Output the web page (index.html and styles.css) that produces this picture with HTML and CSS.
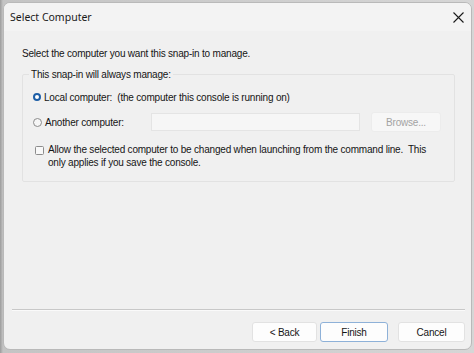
FILE: index.html
```html
<!DOCTYPE html>
<html lang="en">
<head>
  <meta charset="UTF-8" />
  <title>Select Computer</title>
  <link rel="stylesheet" href="styles.css">
</head>
<body>

<div class="dialog">
  <div class="titlebar">
    <span class="title">Select Computer</span>
    <svg class="close" width="11" height="11" viewBox="0 0 11 11">
      <path d="M0.5 0.5 L10.5 10.5 M10.5 0.5 L0.5 10.5" stroke="#1b1b1b" stroke-width="1.1" fill="none"/>
    </svg>
  </div>

  <div class="content">
    <p class="intro">Select the computer you want this snap-in to manage.</p>

    <fieldset class="group">
      <legend>This snap-in will always manage:</legend>

      <div class="row">
        <span class="radio checked"></span>
        <span>Local computer:&nbsp; (the computer this console is running on)</span>
      </div>

      <div class="row row-other">
        <span class="other-label">
          <span class="radio"></span>
          <span>Another computer:</span>
        </span>
        <span class="field"></span>
        <span class="btn btn-disabled browse">Browse...</span>
      </div>

      <div class="check-row">
        <span class="checkbox"></span>
        <span class="check-text">Allow the selected computer to be changed when launching from the command line.&nbsp; This<br>only applies if you save the console.</span>
      </div>
    </fieldset>
  </div>

  <div class="footer">
    <div class="separator"></div>
    <div class="buttons">
      <span class="btn back">&lt; Back</span>
      <span class="btn finish">Finish</span>
      <span class="btn cancel">Cancel</span>
    </div>
  </div>
</div>

</body>
</html>
```

FILE: styles.css
```css
html, body {
  margin: 0;
  height: 100%;
}
body {
  background: linear-gradient(to right, #9c9c9c 0, #c4c4c4 3px, #d6d6d6 100%);
  font-family: "Liberation Sans", Arial, sans-serif;
  font-size: 10px;
  letter-spacing: -0.2px;
  color: #151515;
  overflow: hidden;
}
.dialog {
  margin: 2px 2px 0 3px;
  height: 348px;
  box-sizing: border-box;
  border: 1px solid #b9b9b9;
  border-radius: 7px;
  background: #f0f0f0;
  display: flex;
  flex-direction: column;
  overflow: hidden;
}
.titlebar {
  height: 28px;
  flex: none;
  display: flex;
  align-items: center;
  justify-content: space-between;
  padding: 0 6px 0 6px;
  background: #f3f3f3;
}
.title {
  font-family: "Noto Sans", "Open Sans", sans-serif;
  font-size: 10.5px;
  letter-spacing: 0;
  color: #1a1a1a;
}
.close {
  margin-right: 1px;
}
.content {
  flex: 1;
  padding: 16px 15px 0 18px;
}
.intro {
  margin: 0;
  line-height: 13px;
}
.group {
  margin: 8px 0 0 0;
  padding: 7px 0 12px 10px;
  border: 1px solid #e2e2e2;
  border-radius: 2px;
  width: 433px;
  box-sizing: border-box;
}
.group legend {
  padding: 0 2px;
  margin-left: -4px;
  line-height: 13px;
}
.row {
  display: flex;
  align-items: center;
  gap: 3px;
  height: 18px;
  white-space: nowrap;
}
.row-other {
  margin-top: 6px;
  height: 20px;
  gap: 0;
}
.other-label {
  display: flex;
  align-items: center;
  gap: 3px;
  width: 118px;
}
.radio {
  width: 7px;
  height: 7px;
  border-radius: 50%;
  border: 1px solid #8c8c8c;
  background: #f6f6f6;
  flex: none;
}
.radio.checked {
  width: 4px;
  height: 4px;
  border: 2.5px solid #1d5ea6;
  background: #ffffff;
}
.field {
  width: 209px;
  height: 18px;
  box-sizing: border-box;
  border: 1px solid #e4e4e4;
  background: #f6f6f6;
}
.btn {
  display: flex;
  align-items: center;
  justify-content: center;
  height: 20px;
  box-sizing: border-box;
  border: 1px solid #e2e2e2;
  border-radius: 3px;
  background: #fdfdfd;
}
.btn-disabled {
  background: #f7f7f7;
  border-color: #ececec;
  color: #a3a3a3;
}
.browse {
  width: 70px;
  margin-left: 11px;
}
.check-row {
  display: flex;
  align-items: flex-start;
  gap: 4px;
  margin-top: 11px;
  padding-left: 2px;
  line-height: 13px;
  white-space: nowrap;
}
.checkbox {
  width: 7px;
  height: 7px;
  margin-top: 3px;
  border: 1px solid #8c8c8c;
  border-radius: 1.5px;
  background: #f8f8f8;
  flex: none;
}
.footer {
  flex: none;
  padding: 0 6px 7px 8px;
}
.separator {
  height: 1px;
  background: #c8c8c8;
  border-bottom: 1px solid #fafafa;
}
.buttons {
  display: flex;
  justify-content: flex-end;
  margin-top: 11px;
}
.buttons .btn {
  width: 67px;
}
.buttons .back {
  width: 65px;
  margin-right: 3px;
}
.buttons .finish {
  width: 68px;
  border-color: #8eb1d8;
  margin-right: 10px;
}
```
